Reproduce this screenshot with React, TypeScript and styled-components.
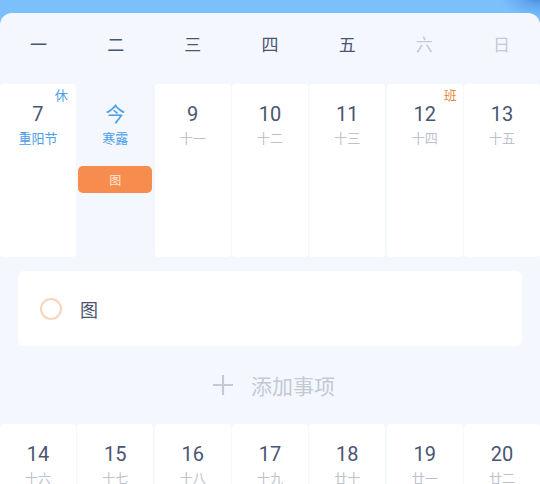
import React from "react";
import styled, { createGlobalStyle } from "styled-components";

const GlobalStyle = createGlobalStyle`
  html, body {
    margin: 0;
    padding: 0;
    height: 100%;
    overflow: hidden;
  }
  body {
    background:
      radial-gradient(ellipse 40px 22px at 540px -4px, #3f82d6 0%, rgba(80, 150, 230, 0.6) 45%, rgba(123, 192, 251, 0) 100%),
      #7bc0fb;
    font-family: "Roboto", "Noto Sans CJK SC", sans-serif;
  }
`;

const Panel = styled.div`
  margin-top: 13px;
  height: 471px;
  background: #f4f8fe;
  border-radius: 12px 12px 0 0;
  overflow: hidden;
`;

const WeekHeader = styled.div`
  display: grid;
  grid-template-columns: repeat(7, 1fr);
  height: 60px;
  align-items: center;
  margin-bottom: 11px;
`;

const WeekDay = styled.div<{ $weekend?: boolean }>`
  text-align: center;
  font-family: "Noto Sans CJK SC", sans-serif;
  font-size: 17px;
  color: ${(p) => (p.$weekend ? "#c3c9d5" : "#4a5572")};
`;

const WeekRow = styled.div<{ $height: number }>`
  display: grid;
  grid-template-columns: repeat(7, 1fr);
  column-gap: 1.5px;
  height: ${(p) => p.$height}px;
`;

const DayCell = styled.div<{ $today?: boolean }>`
  position: relative;
  background: ${(p) => (p.$today ? "transparent" : "#ffffff")};
  border-radius: 4px;
  display: flex;
  flex-direction: column;
  align-items: center;
  padding-top: 18px;
`;

const DateNum = styled.div<{ $blue?: boolean }>`
  font-size: 20px;
  line-height: 24px;
  height: 24px;
  color: ${(p) => (p.$blue ? "#4b9de6" : "#4a5572")};
  font-family: ${(p) =>
    p.$blue ? `"Noto Sans CJK SC", sans-serif` : `"Roboto", "Noto Sans CJK SC", sans-serif`};
`;

const Lunar = styled.div<{ $festival?: boolean }>`
  margin-top: 3px;
  font-family: "Noto Sans CJK SC", sans-serif;
  font-size: 13px;
  line-height: 18px;
  color: ${(p) => (p.$festival ? "#4b9de6" : "#bcc1cc")};
`;

const Tag = styled.span<{ $kind: "rest" | "work" }>`
  position: absolute;
  top: 3px;
  right: ${(p) => (p.$kind === "rest" ? 8 : 6)}px;
  font-family: "Noto Sans CJK SC", sans-serif;
  font-size: 13px;
  line-height: 16px;
  color: ${(p) => (p.$kind === "rest" ? "#4b9de6" : "#e58a3c")};
`;

const Chip = styled.div`
  align-self: stretch;
  margin: 19px 1px 0;
  height: 27px;
  border-radius: 5px;
  background: #f68c4d;
  color: #fde7d8;
  font-family: "Noto Sans CJK SC", sans-serif;
  font-size: 12px;
  display: flex;
  align-items: center;
  justify-content: center;
`;

const Agenda = styled.div`
  padding: 14px 18px 0;
`;

const EventCard = styled.div`
  height: 75px;
  background: #ffffff;
  border-radius: 6px;
  display: flex;
  align-items: center;
  padding-left: 22px;
  gap: 18px;
`;

const Check = styled.span`
  width: 18px;
  height: 18px;
  border: 2px solid #f9d4bb;
  border-radius: 50%;
`;

const EventTitle = styled.span`
  font-family: "Noto Sans CJK SC", sans-serif;
  font-size: 18px;
  color: #4a5572;
`;

const AddRow = styled.div`
  height: 78px;
  display: flex;
  align-items: center;
  justify-content: center;
  gap: 17px;
  color: #c3c9d5;
  font-family: "Noto Sans CJK SC", sans-serif;
  font-size: 21px;
  padding-left: 7px;
`;

type Day = {
  date: string;
  lunar: string;
  festival?: boolean;
  today?: boolean;
  tag?: "rest" | "work";
  event?: string;
};

const week1: Day[] = [
  { date: "7", lunar: "重阳节", festival: true, tag: "rest" },
  { date: "今", lunar: "寒露", festival: true, today: true, event: "图" },
  { date: "9", lunar: "十一" },
  { date: "10", lunar: "十二" },
  { date: "11", lunar: "十三" },
  { date: "12", lunar: "十四", tag: "work" },
  { date: "13", lunar: "十五" },
];

const week2: Day[] = [
  { date: "14", lunar: "十六" },
  { date: "15", lunar: "十七" },
  { date: "16", lunar: "十八" },
  { date: "17", lunar: "十九" },
  { date: "18", lunar: "廿十" },
  { date: "19", lunar: "廿一" },
  { date: "20", lunar: "廿二" },
];

const weekdays = ["一", "二", "三", "四", "五", "六", "日"];

const PlusIcon = () => (
  <svg width="22" height="22" viewBox="0 0 22 22">
    <path d="M11 1v20M1 11h20" stroke="#c3c9d5" strokeWidth="2.2" fill="none" />
  </svg>
);

const Week = ({ days, height }: { days: Day[]; height: number }) => (
  <WeekRow $height={height}>
    {days.map((d) => (
      <DayCell key={d.date} $today={d.today}>
        {d.tag && <Tag $kind={d.tag}>{d.tag === "rest" ? "休" : "班"}</Tag>}
        <DateNum $blue={d.today}>{d.date}</DateNum>
        <Lunar $festival={d.festival}>{d.lunar}</Lunar>
        {d.event && <Chip>{d.event}</Chip>}
      </DayCell>
    ))}
  </WeekRow>
);

export default function App() {
  return (
    <>
      <GlobalStyle />
      <Panel>
        <WeekHeader>
          {weekdays.map((w, i) => (
            <WeekDay key={w} $weekend={i >= 5}>
              {w}
            </WeekDay>
          ))}
        </WeekHeader>
        <Week days={week1} height={173} />
        <Agenda>
          <EventCard>
            <Check />
            <EventTitle>图</EventTitle>
          </EventCard>
          <AddRow>
            <PlusIcon />
            <span>添加事项</span>
          </AddRow>
        </Agenda>
        <Week days={week2} height={80} />
      </Panel>
    </>
  );
}
